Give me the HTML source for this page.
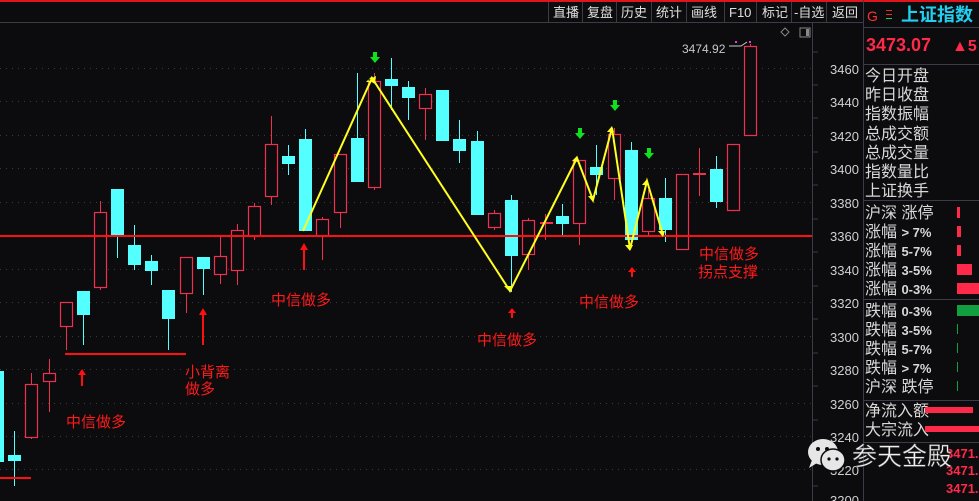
<!DOCTYPE html><html><head><meta charset="utf-8"><style>
body{margin:0;background:#0c0b0d;width:979px;height:501px;overflow:hidden;font-family:"Liberation Sans","Noto Sans CJK SC",sans-serif}
svg{display:block}
</style></head><body>
<svg width="979" height="501" xmlns="http://www.w3.org/2000/svg" font-family="Liberation Sans, Noto Sans CJK SC, sans-serif">
<rect width="979" height="501" fill="#0c0b0d"/>
<rect width="979" height="2" fill="#e0141e"/>
<line x1="0" y1="22.5" x2="863" y2="22.5" stroke="#3a3d48"/>
<g stroke="#3a3a3a" stroke-dasharray="1,5">
<line x1="0" y1="68.5" x2="812" y2="68.5"/><line x1="0" y1="101.5" x2="812" y2="101.5"/><line x1="0" y1="135.5" x2="812" y2="135.5"/><line x1="0" y1="168.5" x2="812" y2="168.5"/><line x1="0" y1="202.5" x2="812" y2="202.5"/><line x1="0" y1="269.5" x2="812" y2="269.5"/><line x1="0" y1="302.5" x2="812" y2="302.5"/><line x1="0" y1="336.5" x2="812" y2="336.5"/><line x1="0" y1="369.5" x2="812" y2="369.5"/><line x1="0" y1="403.5" x2="812" y2="403.5"/><line x1="0" y1="436.5" x2="812" y2="436.5"/><line x1="0" y1="469.5" x2="812" y2="469.5"/>
</g>
<line x1="812.5" y1="23" x2="812.5" y2="501" stroke="#3a3d48"/>
<g stroke="#3a3d48"><line x1="812" y1="52" x2="818" y2="52"/><line x1="812" y1="85" x2="818" y2="85"/><line x1="812" y1="118" x2="818" y2="118"/><line x1="812" y1="152" x2="818" y2="152"/><line x1="812" y1="185" x2="818" y2="185"/><line x1="812" y1="219" x2="818" y2="219"/><line x1="812" y1="252" x2="818" y2="252"/><line x1="812" y1="286" x2="818" y2="286"/><line x1="812" y1="319" x2="818" y2="319"/><line x1="812" y1="353" x2="818" y2="353"/><line x1="812" y1="386" x2="818" y2="386"/><line x1="812" y1="420" x2="818" y2="420"/><line x1="812" y1="453" x2="818" y2="453"/><line x1="812" y1="486" x2="818" y2="486"/></g>
<g fill="#d0d0d0" font-size="13">
<text x="830" y="74">3460</text><text x="830" y="107">3440</text><text x="830" y="141">3420</text><text x="830" y="174">3400</text><text x="830" y="208">3380</text><text x="830" y="241">3360</text><text x="830" y="275">3340</text><text x="830" y="308">3320</text><text x="830" y="342">3300</text><text x="830" y="375">3280</text><text x="830" y="409">3260</text><text x="830" y="442">3240</text><text x="830" y="475">3220</text><text x="830" y="505">3200</text>
</g>
<g stroke-width="1">
<g stroke="#54ffff">
<line x1="14.5" y1="431" x2="14.5" y2="486"/><line x1="83.5" y1="291" x2="83.5" y2="345"/><line x1="117.5" y1="189" x2="117.5" y2="258"/><line x1="134.5" y1="225" x2="134.5" y2="270"/><line x1="151.5" y1="255" x2="151.5" y2="285"/><line x1="168.5" y1="290" x2="168.5" y2="350"/><line x1="203.5" y1="257" x2="203.5" y2="295"/><line x1="288.5" y1="145" x2="288.5" y2="175"/><line x1="305.5" y1="129" x2="305.5" y2="231"/><line x1="357.5" y1="73" x2="357.5" y2="182"/><line x1="391.5" y1="58" x2="391.5" y2="110"/><line x1="408.5" y1="81" x2="408.5" y2="120"/><line x1="459.5" y1="120" x2="459.5" y2="163"/><line x1="477.5" y1="131" x2="477.5" y2="215"/><line x1="511.5" y1="195" x2="511.5" y2="292"/><line x1="562.5" y1="204" x2="562.5" y2="235"/><line x1="596.5" y1="145" x2="596.5" y2="195"/><line x1="631.5" y1="142" x2="631.5" y2="240"/><line x1="665.5" y1="178" x2="665.5" y2="242"/><line x1="716.5" y1="156" x2="716.5" y2="208"/>
</g>
<g stroke="#f0304f">
<line x1="31.5" y1="373" x2="31.5" y2="439"/><line x1="49.5" y1="359" x2="49.5" y2="412"/><line x1="66.5" y1="302" x2="66.5" y2="350"/><line x1="100.5" y1="201" x2="100.5" y2="290"/><line x1="186.5" y1="257" x2="186.5" y2="313"/><line x1="220.5" y1="237" x2="220.5" y2="284"/><line x1="237.5" y1="224" x2="237.5" y2="285"/><line x1="254.5" y1="203" x2="254.5" y2="240"/><line x1="271.5" y1="116" x2="271.5" y2="205"/><line x1="322.5" y1="217" x2="322.5" y2="260"/><line x1="340.5" y1="154" x2="340.5" y2="228"/><line x1="374.5" y1="73" x2="374.5" y2="190"/><line x1="425.5" y1="88" x2="425.5" y2="140"/><line x1="494.5" y1="210" x2="494.5" y2="230"/><line x1="528.5" y1="218" x2="528.5" y2="270"/><line x1="545.5" y1="214" x2="545.5" y2="240"/><line x1="579.5" y1="160" x2="579.5" y2="245"/><line x1="614.5" y1="128" x2="614.5" y2="200"/><line x1="648.5" y1="190" x2="648.5" y2="235"/><line x1="699.5" y1="148" x2="699.5" y2="196"/><line x1="750.5" y1="44" x2="750.5" y2="135"/>
</g>
</g>
<g fill="#54ffff">
<rect x="0" y="371" width="4" height="91"/><rect x="8" y="455" width="13" height="6"/><rect x="77" y="291" width="13" height="24"/><rect x="111" y="189" width="13" height="46"/><rect x="128" y="245" width="13" height="20"/><rect x="145" y="261" width="13" height="10"/><rect x="162" y="290" width="13" height="29"/><rect x="197" y="257" width="13" height="12"/><rect x="282" y="156" width="13" height="8"/><rect x="299" y="139" width="13" height="92"/><rect x="351" y="138" width="13" height="44"/><rect x="385" y="79" width="13" height="7"/><rect x="402" y="87" width="13" height="11"/><rect x="436" y="90" width="13" height="51"/><rect x="453" y="139" width="13" height="12"/><rect x="471" y="141" width="13" height="74"/><rect x="505" y="200" width="13" height="56"/><rect x="556" y="216" width="13" height="8"/><rect x="590" y="167" width="13" height="8"/><rect x="625" y="150" width="13" height="90"/><rect x="659" y="198" width="13" height="32"/><rect x="710" y="169" width="13" height="33"/>
</g>
<g fill="#0c0b0d" stroke="#f0304f" stroke-width="1.2">
<rect x="25.5" y="384.5" width="12" height="53"/><rect x="43.5" y="373.5" width="12" height="8"/><rect x="60.5" y="302.5" width="12" height="24"/><rect x="94.5" y="212.5" width="12" height="75"/><rect x="180.5" y="257.5" width="12" height="36"/><rect x="214.5" y="256.5" width="12" height="18"/><rect x="231.5" y="230.5" width="12" height="40"/><rect x="248.5" y="206.5" width="12" height="30"/><rect x="265.5" y="144.5" width="12" height="52"/><rect x="316.5" y="219.5" width="12" height="17"/><rect x="334.5" y="154.5" width="12" height="58"/><rect x="368.5" y="81.5" width="12" height="106"/><rect x="419.5" y="94.5" width="12" height="14"/><rect x="488.5" y="213.5" width="12" height="14"/><rect x="522.5" y="220.5" width="12" height="34"/><rect x="573.5" y="160.5" width="12" height="63"/><rect x="608.5" y="134.5" width="12" height="44"/><rect x="642.5" y="198.5" width="12" height="33"/><rect x="676.5" y="174.5" width="12" height="75"/><rect x="727.5" y="144.5" width="12" height="66"/><rect x="744.5" y="46.5" width="12" height="89"/>
</g>
<rect x="540" y="222" width="13" height="2" fill="#f0304f"/><rect x="693" y="173" width="13" height="2" fill="#f0304f"/>
<rect x="0" y="235" width="812" height="2" fill="#ff1010"/>
<rect x="65" y="353" width="121" height="2" fill="#ff1010"/>
<rect x="0" y="477" width="31" height="2" fill="#ff1010"/>
<polyline points="303,231 372,78 510,291 577,158 593,200 612,128 630,249 647,181 663,235" fill="none" stroke="#ffff20" stroke-width="2"/>
<g fill="#ffff20"><path d="M372,76 l-6,6 h4 z M368,80 l8,-4 l-1,8z"/><path d="M510,292 l-6,-6 l8,0z"/><path d="M577,156 l-5,5 l7,1z"/><path d="M593,202 l-5,-6 l7,0z"/><path d="M612,126 l-5,6 l7,0z"/><path d="M630,251 l-5,-6 l8,0z"/><path d="M647,179 l-5,6 l7,0z"/><path d="M663,237 l-5,-6 l7,0z"/></g>
<g fill="#10e020"><path d="M373,52h4v5h3l-5,6l-5,-6h3z"/><path d="M578,128h4v5h3l-5,6l-5,-6h3z"/><path d="M613,100h4v5h3l-5,6l-5,-6h3z"/><path d="M647,148h4v5h3l-5,6l-5,-6h3z"/></g>
<g fill="#ff1010"><path d="M304,243l-4,7h3v20h2v-20h3z"/><path d="M82,369l-4,6h3v11h2v-11h3z"/><path d="M203,308l-4,7h3v30h2v-30h3z"/><path d="M512,308l-4,5h3v5h2v-5h3z"/><path d="M632,267l-4,5h3v5h2v-5h3z"/></g>
<g fill="#ff1a1a" font-size="15">
<text x="66" y="427">中信做多</text><text x="271" y="305">中信做多</text><text x="185" y="377">小背离</text><text x="185" y="394">做多</text><text x="477" y="345">中信做多</text><text x="579" y="307">中信做多</text><text x="699" y="259">中信做多</text><text x="698" y="277">拐点支撑</text>
</g>
<text x="682" y="53" fill="#c8c8c8" font-size="12">3474.92</text>
<path d="M729,46h12l6,-4" stroke="#c8c8c8" fill="none"/>
<rect x="735" y="41" width="2" height="2" fill="#e040e0"/><rect x="749" y="41" width="2" height="2" fill="#e040e0"/>
<path d="M785,28l4,4l-4,4l-4,-4z" fill="none" stroke="#888"/>
<rect x="800" y="28" width="10" height="9" fill="none" stroke="#888"/><rect x="806" y="29" width="3" height="7" fill="#888"/>
<g stroke="#3a3d48"><line x1="548.5" y1="2" x2="548.5" y2="22"/><line x1="582.5" y1="2" x2="582.5" y2="22"/><line x1="616.5" y1="2" x2="616.5" y2="22"/><line x1="651.5" y1="2" x2="651.5" y2="22"/><line x1="686.5" y1="2" x2="686.5" y2="22"/><line x1="724.5" y1="2" x2="724.5" y2="22"/><line x1="756.5" y1="2" x2="756.5" y2="22"/><line x1="791.5" y1="2" x2="791.5" y2="22"/><line x1="826.5" y1="2" x2="826.5" y2="22"/><line x1="863.5" y1="0" x2="863.5" y2="501"/></g>
<g fill="#e0e0e0" font-size="13"><text x="553" y="17">直播</text><text x="587" y="17">复盘</text><text x="621" y="17">历史</text><text x="656" y="17">统计</text><text x="691" y="17">画线</text><text x="729" y="17">F10</text><text x="762" y="17">标记</text><text x="794" y="17">-自选</text><text x="832" y="17">返回</text></g>
<text x="867" y="21" fill="#ff3030" font-size="14">G</text>
<g stroke-width="1"><line x1="886" y1="10.5" x2="892" y2="10.5" stroke="#e03030"/><line x1="886" y1="14.5" x2="892" y2="14.5" stroke="#e03030"/><line x1="886" y1="18.5" x2="892" y2="18.5" stroke="#20d040"/></g>
<text x="901" y="21" fill="#20d0f0" font-size="18" font-weight="bold">上证指数</text>
<line x1="863" y1="27.5" x2="979" y2="27.5" stroke="#3a3d48"/>
<text x="866" y="51" fill="#ff2a4a" font-size="18" font-weight="bold">3473.07</text>
<text x="952" y="51" fill="#ff2a4a" font-size="16" font-weight="bold">▲5</text>
<line x1="863" y1="64.5" x2="979" y2="64.5" stroke="#3a3d48"/>
<g fill="#d8d8d8" font-size="16"><text x="865" y="81">今日开盘</text><text x="865" y="100">昨日收盘</text><text x="865" y="119">指数振幅</text><text x="865" y="139">总成交额</text><text x="865" y="158">总成交量</text><text x="865" y="177">指数量比</text><text x="865" y="196">上证换手</text>
<text x="865" y="218">沪深 涨停</text><text x="865" y="237">涨幅 <tspan font-size="13" font-weight="bold">&gt; 7%</tspan></text><text x="865" y="256">涨幅 <tspan font-size="13" font-weight="bold">5-7%</tspan></text><text x="865" y="275">涨幅 <tspan font-size="13" font-weight="bold">3-5%</tspan></text><text x="865" y="294">涨幅 <tspan font-size="13" font-weight="bold">0-3%</tspan></text>
<text x="865" y="316">跌幅 <tspan font-size="13" font-weight="bold">0-3%</tspan></text><text x="865" y="335">跌幅 <tspan font-size="13" font-weight="bold">3-5%</tspan></text><text x="865" y="354">跌幅 <tspan font-size="13" font-weight="bold">5-7%</tspan></text><text x="865" y="373">跌幅 <tspan font-size="13" font-weight="bold">&gt; 7%</tspan></text><text x="865" y="392">沪深 跌停</text>
<text x="865" y="416">净流入额</text><text x="865" y="435">大宗流入</text></g>
<line x1="863" y1="200.5" x2="979" y2="200.5" stroke="#3a3d48"/>
<line x1="863" y1="299.5" x2="979" y2="299.5" stroke="#3a3d48"/>
<line x1="863" y1="400.5" x2="979" y2="400.5" stroke="#3a3d48"/>
<line x1="863" y1="442.5" x2="979" y2="442.5" stroke="#3a3d48"/>
<g fill="#ff2a4a"><rect x="957" y="207" width="3" height="11"/><rect x="957" y="226" width="4" height="11"/><rect x="957" y="245" width="4" height="11"/><rect x="957" y="264" width="15" height="11"/><rect x="957" y="283" width="22" height="11"/><rect x="925" y="407" width="48" height="6"/><rect x="925" y="426" width="54" height="6"/></g>
<g fill="#10a040"><rect x="957" y="305" width="22" height="11"/><rect x="957" y="324" width="1" height="10"/><rect x="957" y="343" width="1" height="10"/><rect x="957" y="362" width="1" height="10"/><rect x="957" y="381" width="1" height="10"/></g>
<g fill="#ff2a4a" font-size="13" font-weight="bold"><text x="946" y="458">3471.</text><text x="946" y="475">3471.</text><text x="946" y="493">3471.</text></g>
<g fill="#e6e6e6"><ellipse cx="823" cy="452" rx="15" ry="13"/><path d="M812,460l-3,8l8,-5z"/><ellipse cx="833" cy="460" rx="12" ry="11" stroke="#0c0b0d" stroke-width="1.5"/></g>
<g fill="#0c0b0d"><circle cx="818" cy="449" r="2"/><circle cx="827" cy="449" r="2"/><circle cx="829" cy="459" r="1.6"/><circle cx="837" cy="459" r="1.6"/></g>
<text x="852" y="465" fill="#f0f0f0" font-size="25" stroke="#444" stroke-width="0.5">参天金殿</text>
</svg>
</body></html>
